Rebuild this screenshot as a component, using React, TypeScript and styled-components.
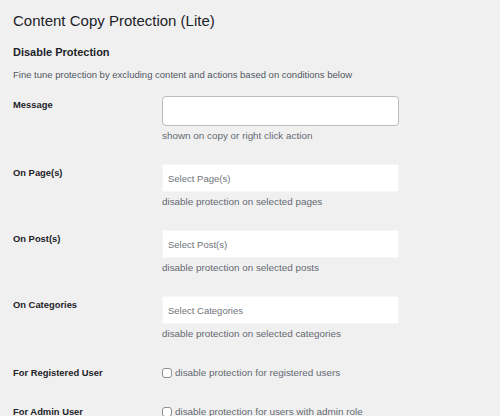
import React from "react";
import styled, { createGlobalStyle } from "styled-components";

const GlobalStyle = createGlobalStyle`
  html, body {
    margin: 0;
    padding: 0;
    background: #f0f0f1;
  }
  body {
    font-family: "Liberation Sans", Arial, sans-serif;
    color: #1d2327;
  }
`;

const Wrap = styled.div`
  padding: 12px 13px 0 13px;
  width: 500px;
  height: 416px;
  box-sizing: border-box;
  overflow: hidden;
`;

const Title = styled.h1`
  margin: 0;
  font-size: 15px;
  font-weight: 400;
  line-height: 18px;
  color: #1d2327;
`;

const SectionTitle = styled.h2`
  margin: 15px 0 0;
  font-size: 11px;
  font-weight: 700;
  line-height: 14px;
  color: #1d2327;
`;

const Description = styled.p`
  margin: 10px 0 0;
  font-size: 9.5px;
  line-height: 12px;
  color: #50575e;
`;

const FormTable = styled.div`
  display: flex;
  flex-direction: column;
  margin-top: 15px;
`;

const Row = styled.div<{ $gap: number }>`
  display: grid;
  grid-template-columns: 149px 237px;
  margin-top: ${(p) => p.$gap}px;
`;

const Label = styled.div<{ $offset: number }>`
  font-size: 9.4px;
  font-weight: 700;
  line-height: 12px;
  padding-top: ${(p) => p.$offset}px;
  color: #1d2327;
`;

const Field = styled.div`
  display: flex;
  flex-direction: column;
`;

const TextInput = styled.div`
  height: 30px;
  box-sizing: border-box;
  background: #fff;
  border: 1px solid #b9bcc0;
  border-radius: 4px;
`;

const SelectBox = styled.div`
  height: 28px;
  box-sizing: border-box;
  background: #fff;
  border: 1px solid #f6f6f6;
  padding: 0 5px;
  display: flex;
  align-items: center;
  font-size: 9.5px;
  color: #6f7378;
`;

const Hint = styled.div`
  margin-top: 4px;
  font-size: 9.9px;
  line-height: 12px;
  color: #646970;
`;

const CheckLine = styled.label`
  display: flex;
  align-items: center;
  gap: 3px;
  font-size: 9.9px;
  line-height: 12px;
  color: #646970;
`;

const Checkbox = styled.span`
  width: 10px;
  height: 10px;
  box-sizing: border-box;
  border: 1px solid #8c8f94;
  border-radius: 3px;
  background: #fff;
  flex: none;
`;

const selects = [
  { label: "On Page(s)", placeholder: "Select Page(s)", hint: "disable protection on selected pages" },
  { label: "On Post(s)", placeholder: "Select Post(s)", hint: "disable protection on selected posts" },
  { label: "On Categories", placeholder: "Select Categories", hint: "disable protection on selected categories" },
];

const checks = [
  { label: "For Registered User", text: "disable protection for registered users", gap: 27 },
  { label: "For Admin User", text: "disable protection for users with admin role", gap: 27 },
];

export default function App() {
  return (
    <>
      <GlobalStyle />
      <Wrap>
        <Title>Content Copy Protection (Lite)</Title>
        <SectionTitle>Disable Protection</SectionTitle>
        <Description>
          Fine tune protection by excluding content and actions based on conditions below
        </Description>
        <FormTable>
          <Row $gap={0}>
            <Label $offset={3}>Message</Label>
            <Field>
              <TextInput />
              <Hint>shown on copy or right click action</Hint>
            </Field>
          </Row>
          {selects.map((s) => (
            <Row $gap={22} key={s.label}>
              <Label $offset={3}>{s.label}</Label>
              <Field>
                <SelectBox>{s.placeholder}</SelectBox>
                <Hint>{s.hint}</Hint>
              </Field>
            </Row>
          ))}
          {checks.map((c) => (
            <Row $gap={c.gap} key={c.label}>
              <Label $offset={0}>{c.label}</Label>
              <CheckLine>
                <Checkbox />
                {c.text}
              </CheckLine>
            </Row>
          ))}
        </FormTable>
      </Wrap>
    </>
  );
}
